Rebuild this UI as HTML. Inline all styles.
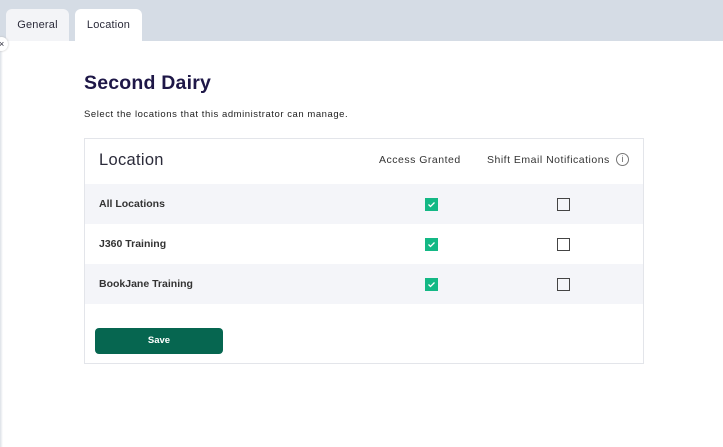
<!DOCTYPE html>
<html><head><style>
*{margin:0;padding:0;box-sizing:border-box}
body{width:723px;height:447px;background:#fff;font-family:"Liberation Sans",sans-serif;position:relative;overflow:hidden;color:#2b2b3a}
.top{position:absolute;left:0;top:0;width:723px;height:41px;background:#d5dce5}
.tab{position:absolute;top:9px;height:32px;border-radius:6px 6px 0 0;font-size:11px;line-height:32px;text-align:center;color:#2b2b3a;letter-spacing:0.2px}
.edge{position:absolute;left:0;top:41px;width:3px;height:406px;background:linear-gradient(90deg,#dde1e7,#fff)}
h1{position:absolute;left:84px;top:72px;font-size:19.5px;font-weight:bold;color:#1e1747;letter-spacing:0.2px}
.sub{position:absolute;left:84px;top:109px;font-size:9.5px;color:#222;letter-spacing:0.55px}
.card{position:absolute;left:84px;top:138px;width:560px;height:226px;border:1px solid #e3e5ea}
.row{position:absolute;left:0;width:558px;height:40px;font-size:10.5px;font-weight:bold;line-height:40px;padding-left:14px;color:#333}
.g{background:#f4f5f9}
.chk{position:absolute;left:340px;top:14px;width:13px;height:13px;background:#14b885}
.chk svg{position:absolute;left:2px;top:2px}
.un{position:absolute;left:472px;top:14px;width:13px;height:13px;border:1.3px solid #444}
.btn{position:absolute;left:10px;top:189px;width:128px;height:26px;background:#066650;border-radius:4px;color:#fff;font-size:9.5px;font-weight:bold;text-align:center;line-height:26px}
.hd{position:absolute;top:15px;font-size:10.5px;color:#333;letter-spacing:0.5px}
</style></head><body>
<div class="top"></div>
<div class="tab" style="left:6px;width:63px;background:#f3f4f7">General</div>
<div class="tab" style="left:75px;width:67px;background:#fff">Location</div>
<div class="edge"></div>
<div style="position:absolute;left:-5px;top:37px;width:13px;height:14px;border-radius:50%;background:#fff;box-shadow:0 0 2px #bbb;font-size:9px;line-height:14px;padding-left:4px">×</div>
<h1>Second Dairy</h1>
<div class="sub">Select the locations that this administrator can manage.</div>
<div class="card">
<div style="position:absolute;left:14px;top:12px;font-size:16.5px;color:#2b2b3a;letter-spacing:0.3px">Location</div>
<div class="hd" style="left:294px">Access Granted</div>
<div class="hd" style="left:402px">Shift Email Notifications</div>
<div style="position:absolute;left:531px;top:14px;width:13px;height:13px;border:1px solid #777;border-radius:50%;font-size:9px;line-height:11px;text-align:center;color:#666">i</div>
<div class="row g" style="top:45px">All Locations<div class="chk"><svg width="9" height="9"><path d="M1.5 4.5l2 2 4-4" stroke="#fff" stroke-width="1.3" fill="none"/></svg></div><div class="un"></div></div>
<div class="row" style="top:85px">J360 Training<div class="chk"><svg width="9" height="9"><path d="M1.5 4.5l2 2 4-4" stroke="#fff" stroke-width="1.3" fill="none"/></svg></div><div class="un"></div></div>
<div class="row g" style="top:125px">BookJane Training<div class="chk"><svg width="9" height="9"><path d="M1.5 4.5l2 2 4-4" stroke="#fff" stroke-width="1.3" fill="none"/></svg></div><div class="un"></div></div>
<div class="btn">Save</div>
</div>
</body></html>
